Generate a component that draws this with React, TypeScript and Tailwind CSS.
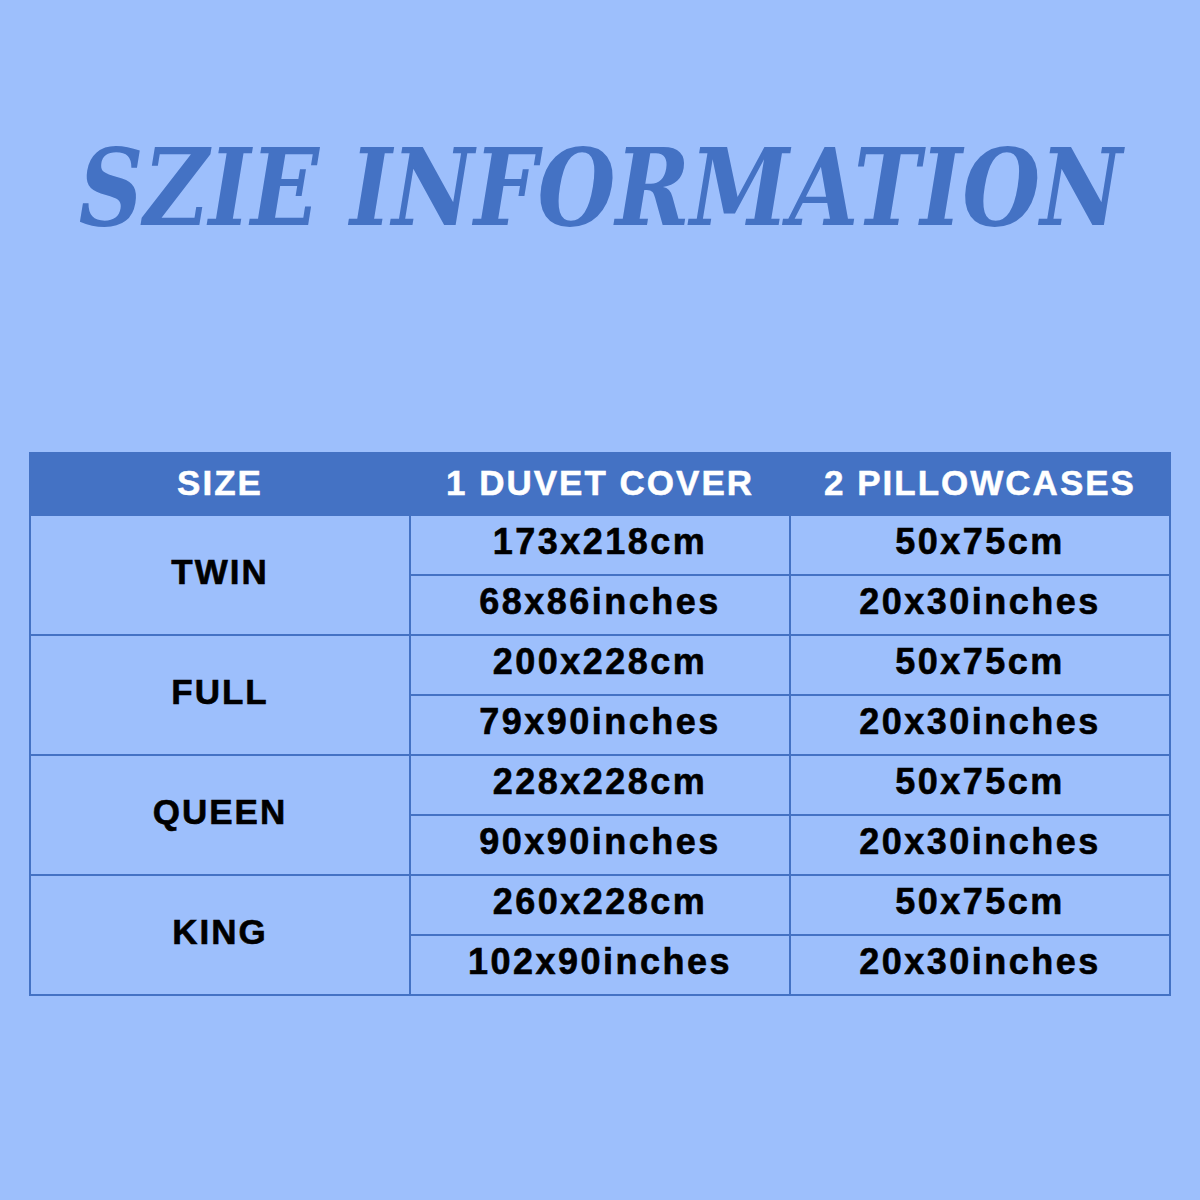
import React from "react";

const rows = [
  { size: "TWIN", duvet: ["173x218cm", "68x86inches"] },
  { size: "FULL", duvet: ["200x228cm", "79x90inches"] },
  { size: "QUEEN", duvet: ["228x228cm", "90x90inches"] },
  { size: "KING", duvet: ["260x228cm", "102x90inches"] },
];
const pillow = ["50x75cm", "20x30inches"];

export default function App() {
  return (
    <div className="w-[1200px] h-[1200px] bg-[#9dbffc] flex flex-col items-center overflow-hidden">
      <div className="mt-[118px] h-[140px] w-[1200px] flex justify-center">
        <h1 className="shrink-0 scale-x-[0.845] text-[#4472c4] italic font-bold text-[106px] leading-[140px] [font-family:'DejaVu_Serif',serif] whitespace-nowrap">
          SZIE INFORMATION
        </h1>
      </div>
      <table className="mt-[194px] w-[1140px] border-collapse table-fixed text-center [font-family:'Liberation_Sans',Arial,sans-serif] font-bold">
        <thead>
          <tr className="bg-[#4472c4] text-white h-[62px] text-[35px] leading-[36px] tracking-[2px]">
            <th className="w-[380px] border-2 border-[#4472c4] font-bold p-0 pb-[2px] [-webkit-text-stroke:0.5px_white]">SIZE</th>
            <th className="w-[380px] border-2 border-[#4472c4] font-bold p-0 pb-[2px] [-webkit-text-stroke:0.5px_white]">1 DUVET COVER</th>
            <th className="w-[380px] border-2 border-[#4472c4] font-bold p-0 pb-[2px] [-webkit-text-stroke:0.5px_white]">2 PILLOWCASES</th>
          </tr>
        </thead>
        <tbody className="text-black text-[36px] leading-[36px] tracking-[2.5px] [-webkit-text-stroke:0.6px_black]">
          {rows.map((r) => (
            <React.Fragment key={r.size}>
              <tr className="h-[60px]">
                <td rowSpan={2} className="border-2 border-[#4472c4] p-0 pb-[6px] text-[35px] tracking-[2px]">{r.size}</td>
                <td className="border-2 border-[#4472c4] p-0 pb-[6px]">{r.duvet[0]}</td>
                <td className="border-2 border-[#4472c4] p-0 pb-[6px]">{pillow[0]}</td>
              </tr>
              <tr className="h-[60px]">
                <td className="border-2 border-[#4472c4] p-0 pb-[6px]">{r.duvet[1]}</td>
                <td className="border-2 border-[#4472c4] p-0 pb-[6px]">{pillow[1]}</td>
              </tr>
            </React.Fragment>
          ))}
        </tbody>
      </table>
    </div>
  );
}
